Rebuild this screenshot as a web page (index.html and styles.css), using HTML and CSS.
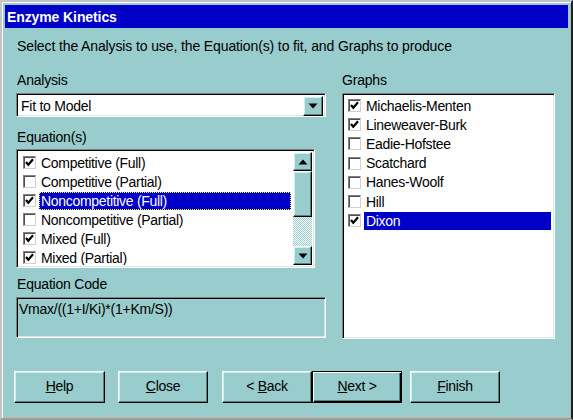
FILE: index.html
```html
<!DOCTYPE html>
<html>
<head>
<meta charset="utf-8">
<title>Enzyme Kinetics</title>
<link rel="stylesheet" href="styles.css">
</head>
<body>
<div class="window">
  <div class="titlebar">Enzyme Kinetics</div>
  <div class="content">
    <p class="intro">Select the Analysis to use, the Equation(s) to fit, and Graphs to produce</p>
    <div class="columns">
      <div class="left">
        <div class="label lbl-analysis">Analysis</div>
        <div class="combo sunken">
          <span class="combo-text">Fit to Model</span>
          <span class="drop-btn raised"><svg width="10" height="6" viewBox="0 0 10 6"><polygon points="0.5,0.5 9.5,0.5 5,5.5" fill="#000"/></svg></span>
        </div>
        <div class="label lbl-eq">Equation(s)</div>
        <div class="listbox eqlist sunken">
          <ul class="items">
            <li class="item"><span class="cb"><svg viewBox="0 0 11 11"><path d="M2 5 L4.3 7.8 L9 2.3" fill="none" stroke="#000" stroke-width="2.2"/></svg></span><span class="txt">Competitive (Full)</span></li>
            <li class="item"><span class="cb"></span><span class="txt">Competitive (Partial)</span></li>
            <li class="item sel focus"><span class="cb"><svg viewBox="0 0 11 11"><path d="M2 5 L4.3 7.8 L9 2.3" fill="none" stroke="#000" stroke-width="2.2"/></svg></span><span class="txt">Noncompetitive (Full)</span></li>
            <li class="item"><span class="cb"></span><span class="txt">Noncompetitive (Partial)</span></li>
            <li class="item"><span class="cb"><svg viewBox="0 0 11 11"><path d="M2 5 L4.3 7.8 L9 2.3" fill="none" stroke="#000" stroke-width="2.2"/></svg></span><span class="txt">Mixed (Full)</span></li>
            <li class="item"><span class="cb"><svg viewBox="0 0 11 11"><path d="M2 5 L4.3 7.8 L9 2.3" fill="none" stroke="#000" stroke-width="2.2"/></svg></span><span class="txt">Mixed (Partial)</span></li>
          </ul>
          <div class="scrollbar">
            <div class="sb-btn raised"><svg width="10" height="6" viewBox="0 0 10 6"><polygon points="5,0.5 9.5,5.5 0.5,5.5" fill="#000"/></svg></div>
            <div class="sb-thumb raised"></div>
            <div class="sb-track"></div>
            <div class="sb-btn raised"><svg width="10" height="6" viewBox="0 0 10 6"><polygon points="0.5,0.5 9.5,0.5 5,5.5" fill="#000"/></svg></div>
          </div>
        </div>
        <div class="label lbl-code">Equation Code</div>
        <div class="codebox sunken">Vmax/((1+I/Ki)*(1+Km/S))</div>
      </div>
      <div class="right">
        <div class="label lbl-graphs">Graphs</div>
        <div class="listbox graphlist sunken">
          <ul class="items">
            <li class="item"><span class="cb"><svg viewBox="0 0 11 11"><path d="M2 5 L4.3 7.8 L9 2.3" fill="none" stroke="#000" stroke-width="2.2"/></svg></span><span class="txt">Michaelis-Menten</span></li>
            <li class="item"><span class="cb"><svg viewBox="0 0 11 11"><path d="M2 5 L4.3 7.8 L9 2.3" fill="none" stroke="#000" stroke-width="2.2"/></svg></span><span class="txt">Lineweaver-Burk</span></li>
            <li class="item"><span class="cb"></span><span class="txt">Eadie-Hofstee</span></li>
            <li class="item"><span class="cb"></span><span class="txt">Scatchard</span></li>
            <li class="item"><span class="cb"></span><span class="txt">Hanes-Woolf</span></li>
            <li class="item"><span class="cb"></span><span class="txt">Hill</span></li>
            <li class="item sel"><span class="cb"><svg viewBox="0 0 11 11"><path d="M2 5 L4.3 7.8 L9 2.3" fill="none" stroke="#000" stroke-width="2.2"/></svg></span><span class="txt">Dixon</span></li>
          </ul>
        </div>
      </div>
    </div>
    <div class="buttons">
      <div class="btn raised b-help"><span><u>H</u>elp</span></div>
      <div class="btn raised b-close"><span><u>C</u>lose</span></div>
      <div class="btn raised b-back"><span>&lt; <u>B</u>ack</span></div>
      <div class="btn raised b-next default"><span><u>N</u>ext &gt;</span></div>
      <div class="btn raised b-finish"><span><u>F</u>inish</span></div>
    </div>
  </div>
</div>
</body>
</html>
```

FILE: styles.css
```css
* { box-sizing: border-box; }
html, body { margin: 0; padding: 0; }
body {
  width: 573px;
  height: 420px;
  overflow: hidden;
  background: #c0c0c0;
  font-family: "Liberation Sans", Arial, sans-serif;
  font-size: 14px;
  color: #000;
}
.window {
  width: 573px;
  height: 420px;
  background: #99cccc;
  border: 2px solid;
  border-color: #c4c4c4 #202020 #a0a0a0 #c4c4c4;
  box-shadow: inset 1px 1px 0 #ffffff, inset -1px -1px 0 #b8b8b8;
  padding: 3px;
}
.titlebar {
  height: 23px;
  background: #0000c8;
  color: #fff;
  font-weight: bold;
  line-height: 22px;
  padding: 1px 0 0 2px;
  letter-spacing: -0.1px;
}
.content { padding-left: 11px; }
.intro {
  margin: 10px 0 0 1px;
  line-height: 16px;
  letter-spacing: -0.12px;
}
.columns {
  display: flex;
  gap: 16px;
  margin-top: 18px;
}
.left { width: 310px; }
.right { width: 213px; }
.label {
  line-height: 16px;
  padding-left: 1px;
  letter-spacing: -0.2px;
}
.lbl-analysis { margin-bottom: 5px; }
.lbl-eq { margin-top: 12px; margin-bottom: 4px; }
.lbl-code { margin-top: 8px; margin-bottom: 5px; }
.lbl-graphs { padding-left: 0; margin-bottom: 5px; }

.sunken {
  border: 1px solid;
  border-color: #808080 #ffffff #ffffff #808080;
  box-shadow: inset 1px 1px 0 #000, inset -1px -1px 0 #d8e8e8;
}
.raised {
  background: #99cccc;
  border: 1px solid;
  border-color: #ffffff #000 #000 #ffffff;
  box-shadow: inset -1px -1px 0 #5a8080, inset 1px 1px 0 #ccf0f0;
}

.combo {
  width: 310px;
  height: 24px;
  background: #fff;
  display: flex;
  padding: 2px;
}
.combo-text {
  flex: 1;
  line-height: 20px;
  padding-left: 2px;
  letter-spacing: -0.25px;
}
.drop-btn {
  width: 20px;
  height: 20px;
  display: flex;
  align-items: center;
  justify-content: center;
}

.listbox {
  background: #fff;
  padding: 2px;
  display: flex;
  overflow: hidden;
}
.eqlist { width: 299px; height: 119px; }
.graphlist { width: 213px; height: 246px; }
.items {
  list-style: none;
  margin: 0;
  padding: 0;
  flex: 1;
  min-width: 0;
  overflow: hidden;
}
.eqlist .items { padding-top: 1px; }
.item {
  height: 19.2px;
  display: flex;
  align-items: center;
}
.eqlist .item { height: 19px; }
.cb {
  flex: none;
  width: 13px;
  height: 13px;
  margin-left: 4px;
  background: #fff;
  border: 1px solid;
  border-color: #808080 #d0d0d0 #d0d0d0 #808080;
  box-shadow: inset 1px 1px 0 #505050;
  display: flex;
}
.graphlist .cb { margin-left: 3px; }
.cb svg { width: 11px; height: 11px; }
.txt {
  flex: 1;
  margin-left: 3px;
  margin-right: 2px;
  padding-left: 2px;
  line-height: 18px;
  white-space: nowrap;
  letter-spacing: -0.3px;
}
.graphlist .txt { margin-right: 1px; }
.sel .txt { background: #0000c8; color: #fff; }
.focus .txt { outline: 1px dotted #f0f080; outline-offset: -1px; }

.scrollbar {
  flex: none;
  width: 19px;
  display: flex;
  flex-direction: column;
}
.sb-btn {
  height: 19px;
  display: flex;
  align-items: center;
  justify-content: center;
}
.sb-thumb { height: 46px; }
.sb-track {
  flex: 1;
  background: repeating-conic-gradient(#ffffff 0 25%, #99cccc 0 50%) 0 0 / 2px 2px;
}

.codebox {
  width: 310px;
  height: 41px;
  background: #99cccc;
  padding: 3px 2px 2px 2px;
  line-height: 16px;
  letter-spacing: -0.25px;
}

.buttons {
  display: flex;
  margin: 32px 0 0 -2px;
}
.btn {
  width: 90px;
  height: 32px;
  display: flex;
  align-items: center;
  justify-content: center;
  padding-bottom: 2px;
  letter-spacing: -0.3px;
}
.b-help { width: 91px; margin-right: 13px; }
.b-close { margin-right: 14px; }
.b-next { margin-right: 8px; }
.default {
  border: 1px solid #000;
  box-shadow: inset 1px 1px 0 #ffffff, inset -1px -1px 0 #000, inset -2px -2px 0 #5a8080;
}
u { text-underline-offset: 1px; }
```
